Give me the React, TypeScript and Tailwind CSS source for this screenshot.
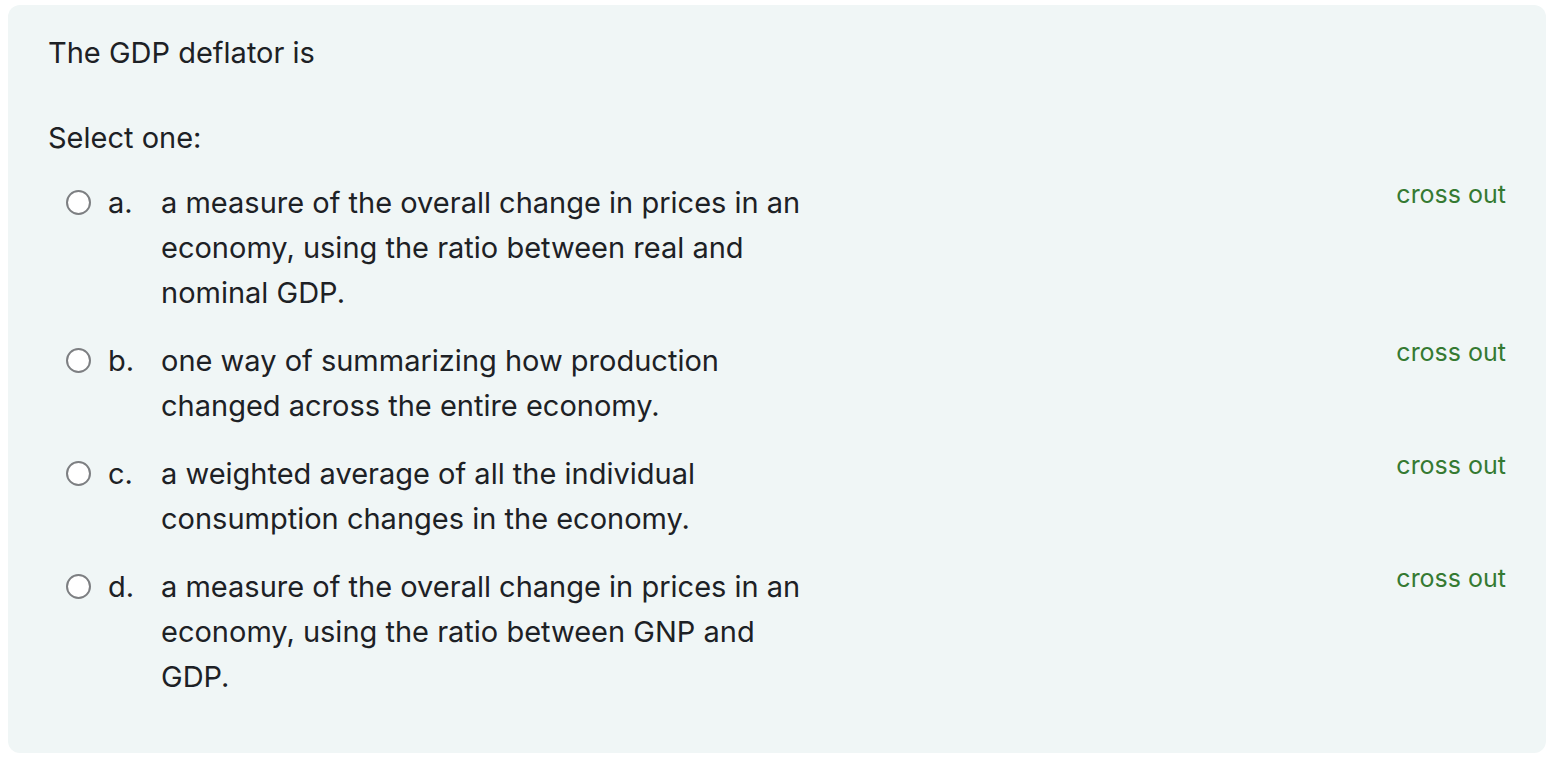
import React from "react";

type Option = { letter: string; text: string };

const options: Option[] = [
  { letter: "a.", text: "a measure of the overall change in prices in an economy, using the ratio between real and nominal GDP." },
  { letter: "b.", text: "one way of summarizing how production changed across the entire economy." },
  { letter: "c.", text: "a weighted average of all the individual consumption changes in the economy." },
  { letter: "d.", text: "a measure of the overall change in prices in an economy, using the ratio between GNP and GDP." },
];

export default function App() {
  return (
    <div className="min-h-screen bg-white pl-2 pr-[6px] pt-[5px] text-[#1d2125]" style={{ fontFamily: "Inter, 'Noto Sans', sans-serif" }}>
      <div className="rounded-xl bg-[#f0f6f6] pl-10 pr-10 pt-[25px] pb-[54px]">
        <p className="text-[29px] leading-[45px]">The GDP deflator is</p>
        <p className="mt-10 text-[29px] leading-[45px]">Select one:</p>
        <div className="mt-[20px] flex flex-col gap-[23px]">
          {options.map((o) => (
            <div key={o.letter} className="flex items-start">
              <div className="flex h-[45px] w-[113px] shrink-0 items-center pl-[18px]">
                <span className="h-[25px] w-[25px] rounded-full border-2 border-[#7d7f82] bg-white" />
                <span className="ml-[17px] text-[29px]">{o.letter}</span>
              </div>
              <p className="w-[648px] text-[29px] leading-[45px]">{o.text}</p>
              <span className="ml-auto mt-[-8px] text-[25px] leading-[45px] text-[#357a32]">cross out</span>
            </div>
          ))}
        </div>
      </div>
    </div>
  );
}
